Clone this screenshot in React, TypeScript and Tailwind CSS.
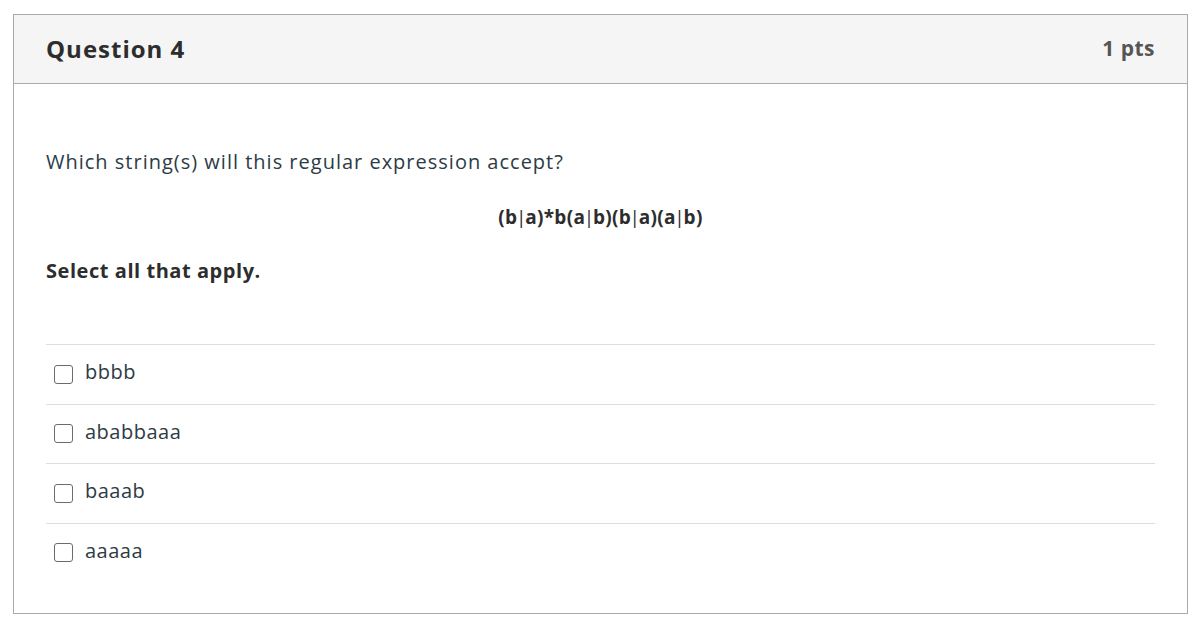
const options = ["bbbb", "ababbaaa", "baaab", "aaaaa"];

function Pipe() {
  return <span className="mx-[-1.5px] font-normal">|</span>;
}

export default function App() {
  return (
    <div
      className="min-h-[624px] bg-white pt-[14px] pl-[13px]"
      style={{ fontFamily: "'Open Sans', Lato, sans-serif" }}
    >
      <div className="w-[1175px] h-[600px] border border-[#aaaaaa] bg-white">
        <div className="h-[69px] bg-[#f5f5f5] border-b border-[#aaaaaa] flex items-center justify-between px-[32px]">
          <h2 className="text-[24px] font-bold tracking-[1px] text-[#2d2d2d]">Question 4</h2>
          <span className="text-[21px] font-bold tracking-[0.5px] text-[#555555]">1 pts</span>
        </div>

        <div className="px-[32px] pt-[63px] text-[#2d3b45]">
          <p className="text-[20px] leading-[30px] tracking-[1px]">
            Which string(s) will this regular expression accept?
          </p>
          <p className="mt-[26px] text-center text-[19px] leading-[28px] font-bold tracking-[0.3px] text-[#2d2d2d]">
            (b<Pipe />a)*b(a<Pipe />b)(b<Pipe />a)(a<Pipe />b)
          </p>
          <p className="mt-[25px] text-[20px] leading-[30px] font-bold tracking-[0.55px] text-[#2d2d2d]">
            Select all that apply.
          </p>

          <ul className="mt-[58px]">
            {options.map((o) => (
              <li
                key={o}
                className="h-[59.5px] border-t border-[#dddddd] flex items-center"
              >
                <span className="ml-[8px] w-[19px] h-[19px] rounded-[3px] border-[1.5px] border-[#6b6b6b] bg-white" />
                <span className="ml-[12px] text-[20px] leading-[30px] -mt-[4px] tracking-[0.5px] text-[#2d3b45]">{o}</span>
              </li>
            ))}
          </ul>
        </div>
      </div>
    </div>
  );
}
